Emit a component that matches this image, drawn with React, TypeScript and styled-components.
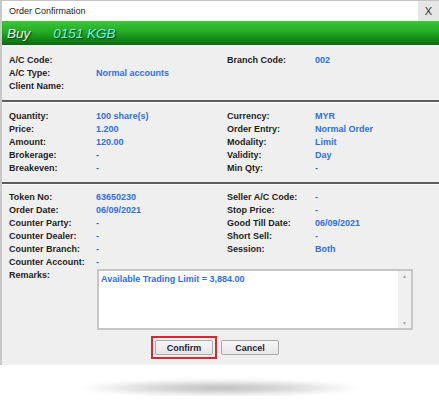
import styled, { createGlobalStyle } from 'styled-components';

const GlobalStyle = createGlobalStyle`
  body {
    margin: 0;
    background: #ffffff;
    font-family: 'Liberation Sans', Arial, sans-serif;
  }
`;

const Page = styled.div`
  width: 439px;
`;

const Dialog = styled.div`
  width: 439px;
  height: 365px;
  box-sizing: border-box;
  background: #efefef;
  border-left: 2px solid #c9c9c9;
  border-top: 1px solid #c4c4c4;
  display: flex;
  flex-direction: column;
`;

const TitleBar = styled.div`
  height: 20px;
  background: #ffffff;
  display: flex;
  align-items: center;
  justify-content: space-between;
`;

const TitleText = styled.div`
  padding-left: 7px;
  font-size: 9px;
  color: #222;
`;

const CloseBox = styled.div`
  width: 21px;
  height: 20px;
  background: #e6e6e6;
  display: flex;
  align-items: center;
  justify-content: center;
  font-size: 11px;
  color: #333;
`;

const HeaderBar = styled.div`
  height: 24px;
  background: linear-gradient(#3cc63c 0%, #24ab24 45%, #138a17 75%, #0b6a12 100%);
  display: flex;
  align-items: center;
  gap: 23px;
  padding-left: 5px;
  font-style: italic;
  font-size: 13.5px;
  text-shadow: 1px 1px 1px #083a0c;
`;

const Side = styled.span<{ $tone: string }>`
  color: ${(p) => p.$tone};
`;

const Section = styled.div<{ $pt: number; $pb: number; $divider?: boolean }>`
  padding: ${(p) => p.$pt}px 0 ${(p) => p.$pb}px 7px;
  border-bottom: ${(p) => (p.$divider ? '2px solid #5e5e5e' : 'none')};
  box-shadow: ${(p) => (p.$divider ? '0 1px 0 #ffffff' : 'none')};
`;

const Grid = styled.div`
  display: grid;
  grid-template-columns: 87px 131px 88px 1fr;
  grid-auto-rows: minmax(13px, auto);
  line-height: 13px;
  font-size: 9px;
  font-weight: bold;
`;

const Label = styled.div`
  color: #1e1e1e;
  white-space: nowrap;
`;

const Value = styled.div`
  color: #2f6fe6;
  white-space: nowrap;
`;

const RemarksBox = styled.div`
  grid-column: 2 / 5;
  width: 316px;
  height: 61px;
  box-sizing: border-box;
  border: 2px solid #c6c6c6;
  background: #ffffff;
  display: flex;
  margin-left: 1px;
`;

const RemarksText = styled.div`
  flex: 1;
  padding: 2px 2px;
  color: #2f6fe6;
`;

const ScrollTrack = styled.div`
  width: 13px;
  background: #f0f0f0;
  display: flex;
  flex-direction: column;
  justify-content: space-between;
  align-items: center;
  padding: 1px 0;
  font-size: 5px;
  line-height: 8px;
  color: #a5a5a5;
`;

const ButtonRow = styled.div`
  display: flex;
  justify-content: center;
  align-items: center;
  gap: 4px;
  margin-top: 6px;
  padding-right: 11px;
`;

const Focus = styled.div`
  border: 2px solid #e2232e;
  padding: 2px;
  display: flex;
`;

const Button = styled.button`
  width: 58px;
  height: 15px;
  padding: 0;
  border: 1px solid #a9a9a9;
  border-radius: 2px;
  background: linear-gradient(#f7f7f7, #e6e6e6);
  font-family: 'Liberation Sans', Arial, sans-serif;
  font-size: 9px;
  font-weight: bold;
  color: #1c1c3a;
`;

const Shadow = styled.div`
  width: 280px;
  height: 16px;
  margin: 15px 0 0 80px;
  border-radius: 50%;
  background: radial-gradient(ellipse at center, rgba(0, 0, 0, 0.28) 0%, rgba(0, 0, 0, 0.12) 45%, rgba(0, 0, 0, 0) 72%);
  filter: blur(2px);
`;

type Row = [string, string, string?, string?];

const accountRows: Row[] = [
  ['A/C Code:', '', 'Branch Code:', '002'],
  ['A/C Type:', 'Normal accounts'],
  ['Client Name:', ''],
];

const orderRows: Row[] = [
  ['Quantity:', '100 share(s)', 'Currency:', 'MYR'],
  ['Price:', '1.200', 'Order Entry:', 'Normal Order'],
  ['Amount:', '120.00', 'Modality:', 'Limit'],
  ['Brokerage:', '-', 'Validity:', 'Day'],
  ['Breakeven:', '-', 'Min Qty:', '-'],
];

const detailRows: Row[] = [
  ['Token No:', '63650230', 'Seller A/C Code:', '-'],
  ['Order Date:', '06/09/2021', 'Stop Price:', '-'],
  ['Counter Party:', '-', 'Good Till Date:', '06/09/2021'],
  ['Counter Dealer:', '-', 'Short Sell:', '-'],
  ['Counter Branch:', '-', 'Session:', 'Both'],
  ['Counter Account:', '-'],
];

function Rows({ rows }: { rows: Row[] }) {
  return (
    <>
      {rows.map((r, i) => (
        <div key={i} style={{ display: 'contents' }}>
          <Label>{r[0]}</Label>
          <Value>{r[1]}</Value>
          <Label>{r[2] ?? ''}</Label>
          <Value>{r[3] ?? ''}</Value>
        </div>
      ))}
    </>
  );
}

export default function App() {
  return (
    <Page>
      <GlobalStyle />
      <Dialog>
        <TitleBar>
          <TitleText>Order Confirmation</TitleText>
          <CloseBox>X</CloseBox>
        </TitleBar>
        <HeaderBar>
          <Side $tone="#f2f2f2">Buy</Side>
          <Side $tone="#74f2e2">0151 KGB</Side>
        </HeaderBar>
        <Section $pt={9} $pb={7} $divider>
          <Grid>
            <Rows rows={accountRows} />
          </Grid>
        </Section>
        <Section $pt={8} $pb={7} $divider>
          <Grid>
            <Rows rows={orderRows} />
          </Grid>
        </Section>
        <Section $pt={7} $pb={0}>
          <Grid>
            <Rows rows={detailRows} />
            <Label>Remarks:</Label>
            <RemarksBox>
              <RemarksText>Available Trading Limit = 3,884.00</RemarksText>
              <ScrollTrack>
                <span>▲</span>
                <span>▼</span>
              </ScrollTrack>
            </RemarksBox>
          </Grid>
        </Section>
        <ButtonRow>
          <Focus>
            <Button>Confirm</Button>
          </Focus>
          <Button>Cancel</Button>
        </ButtonRow>
      </Dialog>
      <Shadow />
    </Page>
  );
}
